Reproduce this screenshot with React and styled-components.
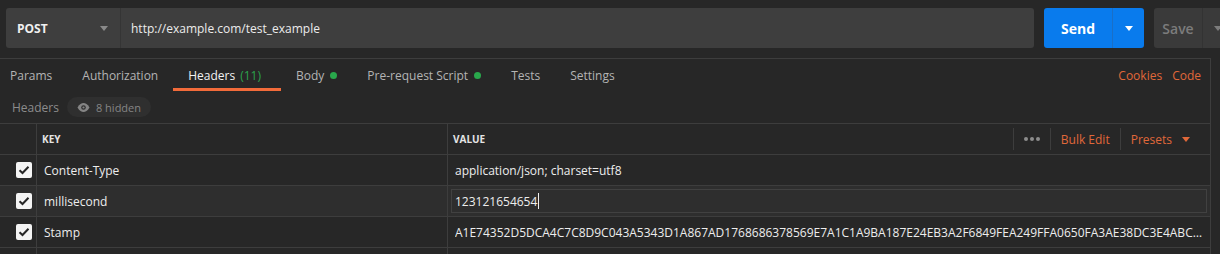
import React from "react";
import styled, { createGlobalStyle } from "styled-components";

const Global = createGlobalStyle`
  html, body { margin: 0; padding: 0; background: #272727; }
  body { font-family: "Open Sans", "Liberation Sans", sans-serif; color: #e6e6e6; overflow: hidden; }
  * { box-sizing: border-box; }
`;

const Page = styled.div`
  width: 1220px;
  height: 254px;
  overflow: hidden;
  background: #272727;
`;

const RequestBar = styled.div`
  display: flex;
  align-items: stretch;
  height: 58px;
  padding: 8px 0 10px 6px;
  width: 1240px;
`;

const UrlGroup = styled.div`
  display: flex;
  width: 1028px;
  background: #3e3e3e;
  border-radius: 3px;
`;

const Method = styled.div`
  width: 115px;
  display: flex;
  align-items: center;
  justify-content: space-between;
  padding: 0 12px 0 11px;
  border-right: 1px solid #353535;
  font-weight: 700;
  font-size: 12px;
  color: #f0f0f0;
`;

const Caret = styled.span`
  width: 0;
  height: 0;
  border-left: 4px solid transparent;
  border-right: 4px solid transparent;
  border-top: 5px solid ${(p) => p.$color || "#8a8a8a"};
  display: inline-block;
`;

const Url = styled.div`
  flex: 1;
  display: flex;
  align-items: center;
  padding-left: 10px;
  font-size: 12px;
  color: #ececec;
`;

const SplitButton = styled.div`
  display: flex;
  margin-left: 10px;
  border-radius: 3px;
  overflow: hidden;
  background: ${(p) => p.$bg};
  color: ${(p) => p.$fg};
  font-size: 14px;
  font-weight: ${(p) => p.$weight};
`;

const ButtonMain = styled.div`
  width: ${(p) => p.$w}px;
  display: flex;
  align-items: center;
  justify-content: center;
  border-right: 1px solid ${(p) => p.$sep};
`;

const ButtonCaret = styled.div`
  width: ${(p) => p.$w}px;
  display: flex;
  align-items: center;
  justify-content: center;
`;

const Pane = styled.div`
  width: 1211px;
  border-top: 1px solid #3d3d3d;
  border-right: 1px solid #3d3d3d;
  height: 200px;
`;

const TabBar = styled.div`
  display: flex;
  align-items: stretch;
  height: 32px;
`;

const Tab = styled.div`
  display: flex;
  align-items: center;
  gap: 6px;
  padding: 3px 15px 0;
  border-bottom: 3px solid ${(p) => (p.$active ? "#f26b3a" : "transparent")};
  font-size: 12px;
  color: ${(p) => (p.$active ? "#f2f2f2" : "#b4b4b4")};
  white-space: nowrap;
  &:first-child { padding-left: 10px; }
`;

const Count = styled.span`
  color: #2ba34d;
  margin: 0 5px 0 5px;
`;

const Dot = styled.span`
  width: 7px;
  height: 7px;
  border-radius: 50%;
  background: #29a84c;
  display: inline-block;
`;

const TabLinks = styled.div`
  margin-left: auto;
  display: flex;
  align-items: center;
  gap: 10px;
  padding: 0 9px 0 0;
  font-size: 12px;
  color: #e0683a;
`;

const SubHeader = styled.div`
  height: 32px;
  display: flex;
  align-items: center;
  padding-left: 12px;
  gap: 8px;
  font-size: 12px;
  color: #8c8c8c;
`;

const Pill = styled.div`
  height: 20px;
  display: flex;
  align-items: center;
  gap: 6px;
  padding: 0 10px;
  border-radius: 10px;
  background: #2f2f2f;
  font-size: 11px;
  color: #858585;
`;

const Table = styled.div`
  border-top: 1px solid #3d3d3d;
`;

const Row = styled.div`
  display: grid;
  grid-template-columns: 37px 411px 1fr;
  height: 31px;
  border-bottom: 1px solid #3d3d3d;
  background: ${(p) => (p.$hover ? "#2e2e2e" : "transparent")};
`;

const Cell = styled.div`
  display: flex;
  align-items: center;
  min-width: 0;
  padding-left: ${(p) => p.$pl ?? 7}px;
  border-right: ${(p) => (p.$last ? "none" : "1px solid #3d3d3d")};
  font-size: 12px;
  color: #ededed;
`;

const CheckCell = styled(Cell)`
  justify-content: flex-end;
  padding: 0 4px 0 0;
`;

const HeadCell = styled(Cell)`
  font-size: 10px;
  font-weight: 700;
  text-transform: uppercase;
  color: #e4e4e4;
  padding-left: 5px;
`;

const Box = styled.div`
  width: 16px;
  height: 16px;
  border-radius: 2px;
  background: #f4f4f4;
  display: flex;
  align-items: center;
  justify-content: center;
`;

const ValueText = styled.span`
  white-space: nowrap;
  overflow: hidden;
  text-overflow: ellipsis;
  padding-right: 6px;
`;

const ValueInput = styled.div`
  flex: 1;
  height: 24px;
  margin: 0 3px 0 -4px;
  padding-left: 3px;
  border: 1px solid #414141;
  display: flex;
  align-items: center;
`;

const Cursor = styled.span`
  width: 1px;
  height: 16px;
  background: #f0f0f0;
  margin-left: 1px;
`;

const Actions = styled.div`
  margin-left: auto;
  display: flex;
  align-items: center;
  height: 100%;
`;

const Action = styled.div`
  display: flex;
  align-items: center;
  gap: 10px;
  height: 22px;
  padding: 0 ${(p) => p.$pr ?? 10}px 0 10px;
  border-left: 1px solid #3d3d3d;
  font-size: 12px;
  font-weight: 400;
  text-transform: none;
  color: #e0683a;
`;

const Dots = styled.div`
  display: flex;
  gap: 2px;
  & > span {
    width: 4px;
    height: 4px;
    border-radius: 50%;
    background: #8c8c8c;
  }
`;

const Check = () => (
  <svg width="12" height="10" viewBox="0 0 12 10">
    <path d="M1.5 5.2 L4.5 8 L10.5 1.8" fill="none" stroke="#262626" strokeWidth="2" />
  </svg>
);

const EyeIcon = () => (
  <svg width="13" height="9" viewBox="0 0 13 9">
    <path d="M0.5 4.5 C2.5 1 4.5 0 6.5 0 C8.5 0 10.5 1 12.5 4.5 C10.5 8 8.5 9 6.5 9 C4.5 9 2.5 8 0.5 4.5 Z" fill="#858585" />
    <circle cx="6.5" cy="4.5" r="2.3" fill="#2f2f2f" />
    <circle cx="6.5" cy="4.5" r="1.1" fill="#858585" />
  </svg>
);

const rows = [
  { key: "Content-Type", value: "application/json; charset=utf8" },
  { key: "millisecond", value: "123121654654", editing: true },
  {
    key: "Stamp",
    value:
      "A1E74352D5DCA4C7C8D9C043A5343D1A867AD1768686378569E7A1C1A9BA187E24EB3A2F6849FEA249FFA0650FA3AE38DC3E4ABCD5E81F0A",
  },
];

export default function App() {
  return (
    <Page>
      <Global />
      <RequestBar>
        <UrlGroup>
          <Method>
            POST
            <Caret />
          </Method>
          <Url>http://example.com/test_example</Url>
        </UrlGroup>
        <SplitButton $bg="#097bed" $fg="#ffffff" $weight={700}>
          <ButtonMain $w={69} $sep="#1a6fc7">Send</ButtonMain>
          <ButtonCaret $w={31}>
            <Caret $color="#ffffff" />
          </ButtonCaret>
        </SplitButton>
        <SplitButton $bg="#3a3a3a" $fg="#7c7c7c" $weight={600}>
          <ButtonMain $w={49} $sep="#333333">Save</ButtonMain>
          <ButtonCaret $w={30}>
            <Caret $color="#7c7c7c" />
          </ButtonCaret>
        </SplitButton>
      </RequestBar>
      <Pane>
        <TabBar>
          <Tab>Params</Tab>
          <Tab>Authorization</Tab>
          <Tab $active>
            <span>
              Headers<Count>(11)</Count>
            </span>
          </Tab>
          <Tab>
            Body <Dot />
          </Tab>
          <Tab>
            Pre-request Script <Dot />
          </Tab>
          <Tab>Tests</Tab>
          <Tab>Settings</Tab>
          <TabLinks>
            <span>Cookies</span>
            <span>Code</span>
          </TabLinks>
        </TabBar>
        <SubHeader>
          Headers
          <Pill>
            <EyeIcon />8 hidden
          </Pill>
        </SubHeader>
        <Table>
          <Row>
            <CheckCell />
            <HeadCell>Key</HeadCell>
            <HeadCell $last>
              Value
              <Actions>
                <Action>
                  <Dots>
                    <span />
                    <span />
                    <span />
                  </Dots>
                </Action>
                <Action>Bulk Edit</Action>
                <Action $pr={20}>
                  Presets <Caret $color="#e0683a" />
                </Action>
              </Actions>
            </HeadCell>
          </Row>
          {rows.map((r) => (
            <Row key={r.key} $hover={r.editing}>
              <CheckCell>
                <Box>
                  <Check />
                </Box>
              </CheckCell>
              <Cell>{r.key}</Cell>
              <Cell $last>
                {r.editing ? (
                  <ValueInput>
                    {r.value}
                    <Cursor />
                  </ValueInput>
                ) : (
                  <ValueText>{r.value}</ValueText>
                )}
              </Cell>
            </Row>
          ))}
          <Row>
            <CheckCell />
            <Cell />
            <Cell $last />
          </Row>
        </Table>
      </Pane>
    </Page>
  );
}
